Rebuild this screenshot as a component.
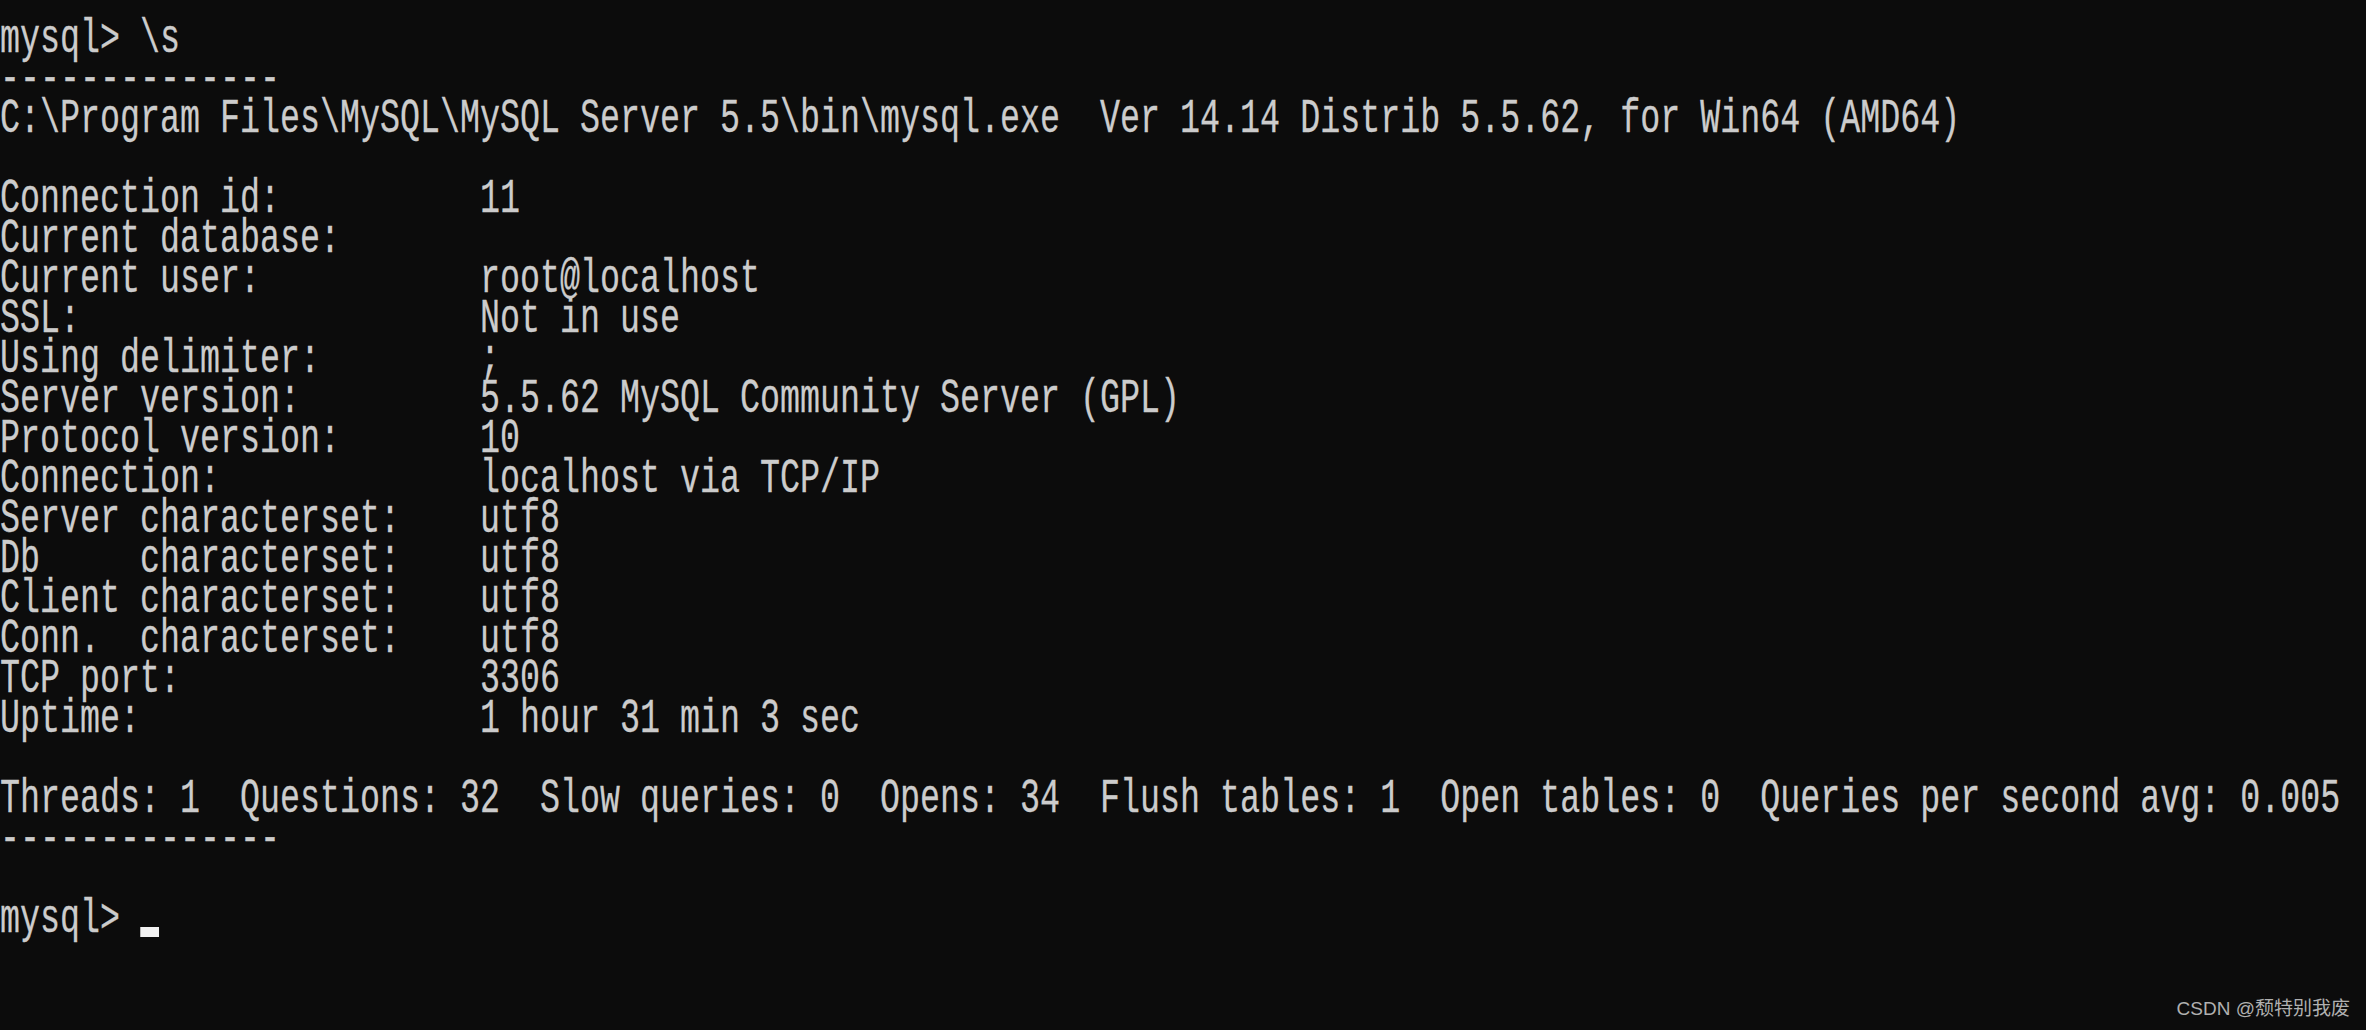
import React from "react";

const pad = (s) => s.padEnd(24, " ");

const rows = [
  ["Connection id:", "11"],
  ["Current database:", ""],
  ["Current user:", "root@localhost"],
  ["SSL:", "Not in use"],
  ["Using delimiter:", ";"],
  ["Server version:", "5.5.62 MySQL Community Server (GPL)"],
  ["Protocol version:", "10"],
  ["Connection:", "localhost via TCP/IP"],
  ["Server characterset:", "utf8"],
  ["Db     characterset:", "utf8"],
  ["Client characterset:", "utf8"],
  ["Conn.  characterset:", "utf8"],
  ["TCP port:", "3306"],
  ["Uptime:", "1 hour 31 min 3 sec"],
];

export default function App() {
  const lines = [
    "mysql> \\s",
    "--------------",
    "C:\\Program Files\\MySQL\\MySQL Server 5.5\\bin\\mysql.exe  Ver 14.14 Distrib 5.5.62, for Win64 (AMD64)",
    "",
    ...rows.map(([a, b]) => pad(a) + b),
    "",
    "Threads: 1  Questions: 32  Slow queries: 0  Opens: 34  Flush tables: 1  Open tables: 0  Queries per second avg: 0.005",
    "--------------",
    "",
  ];
  return (
    <div className="relative h-[1030px] w-full overflow-hidden bg-[#0c0c0c]">
      <div
        className="origin-top-left scale-x-[0.6944] pt-[19px] text-[48px] leading-[40px] text-[#cccccc] whitespace-pre [-webkit-text-stroke:0.3px_#cccccc]"
        style={{ fontFamily: '"Liberation Mono", "Courier New", monospace' }}
      >
        {lines.map((l, i) => (
          <div key={i} className="h-[40px]">
            {l}
          </div>
        ))}
        <div className="h-[40px]">
          {"mysql> "}
          <span className="inline-block h-[10px] w-[27px] translate-y-[5px] bg-[#f2f2f2] align-baseline" />
        </div>
      </div>
      <div
        className="absolute bottom-[9px] right-[16px] text-[19px] leading-[24px] text-[#b0b0b0]"
        style={{ fontFamily: 'Arial, "Liberation Sans", "Noto Sans CJK SC", sans-serif' }}
      >
        CSDN @颓特别我废
      </div>
    </div>
  );
}
